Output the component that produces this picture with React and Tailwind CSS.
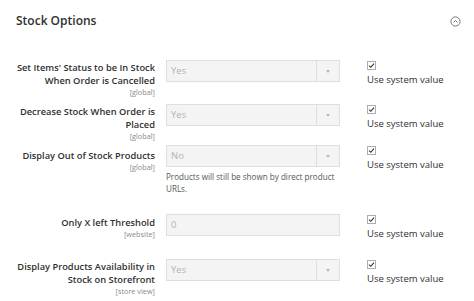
export default function App() {
  const rows = [
    {
      label: ["Set Items' Status to be In Stock", "When Order is Cancelled"],
      scope: "[global]",
      value: "Yes",
      select: true,
      h: "h-[44px]",
      pad: "pt-0",
    },
    {
      label: ["Decrease Stock When Order is", "Placed"],
      scope: "[global]",
      value: "Yes",
      select: true,
      h: "h-[41px]",
      pad: "pt-0",
    },
    {
      label: ["Display Out of Stock Products"],
      scope: "[global]",
      value: "No",
      select: true,
      note: "Products will still be shown by direct product URLs.",
      h: "h-[69px]",
      pad: "pt-[3px]",
    },
    {
      label: ["Only X left Threshold"],
      scope: "[website]",
      value: "0",
      select: false,
      h: "h-[45px]",
      pad: "pt-[1px]",
    },
    {
      label: ["Display Products Availability in", "Stock on Storefront"],
      scope: "[store view]",
      value: "Yes",
      select: true,
      h: "h-[42px]",
      pad: "pt-0",
    },
  ];

  return (
    <div className="w-[474px] h-[301px] overflow-hidden bg-white font-['Open_Sans',sans-serif] text-[#303030]">
      <div className="flex h-[42px] items-center justify-between pl-[16px] pr-[13px]">
        <h2 className="text-[12px] font-semibold leading-[16px] text-[#303030]">
          Stock Options
        </h2>
        <svg width="11" height="11" viewBox="0 0 11 11" fill="none">
          <circle cx="5.5" cy="5.5" r="4.6" stroke="#5a5a5a" strokeWidth="0.8" />
          <polyline
            points="3.6,6.4 5.5,4.5 7.4,6.4"
            stroke="#5a5a5a"
            strokeWidth="0.9"
            fill="none"
          />
        </svg>
      </div>

      <div className="pt-[18px] pl-[16px]">
        {rows.map((row, i) => (
          <div key={i} className={`flex ${row.h}`}>
            <div className={`w-[139px] text-right ${row.pad}`}>
              {row.label.map((line, j) => (
                <div
                  key={j}
                  className="whitespace-nowrap text-[9.3px] font-semibold leading-[13px] pt-[0.5px]"
                >
                  {line}
                </div>
              ))}
              <div className="text-[7.3px] leading-[10px] text-[#8a8a8a]">
                {row.scope}
              </div>
            </div>

            <div className="ml-[11px] w-[174px]">
              <div className="flex h-[22px] border border-[#dedede] bg-[#f4f4f4]">
                <span className="flex-1 pl-[4px] text-[9.5px] leading-[20px] text-[#b3b3b3]">
                  {row.value}
                </span>
                {row.select && (
                  <span className="flex w-[23px] items-center justify-center border-l border-[#dedede]">
                    <span className="h-0 w-0 border-l-[2.5px] border-r-[2.5px] border-t-[3px] border-l-transparent border-r-transparent border-t-[#b8b8b8]" />
                  </span>
                )}
              </div>
              {row.note && (
                <p className="mt-[4px] text-[8.1px] leading-[12px] text-[#555]">
                  {row.note}
                </p>
              )}
            </div>

            <div className="ml-[27px] pt-[1px]">
              <div className="flex h-[9px] w-[9px] items-center justify-center border border-[#adadad] bg-white">
                <svg width="7" height="7" viewBox="0 0 7 7" fill="none">
                  <polyline
                    points="1,3.6 2.8,5.3 6,1.6"
                    stroke="#303030"
                    strokeWidth="1.1"
                    fill="none"
                  />
                </svg>
              </div>
              <div className="mt-[3px] text-[9.5px] leading-[13px] text-[#303030]">
                Use system value
              </div>
            </div>
          </div>
        ))}
      </div>
    </div>
  );
}
